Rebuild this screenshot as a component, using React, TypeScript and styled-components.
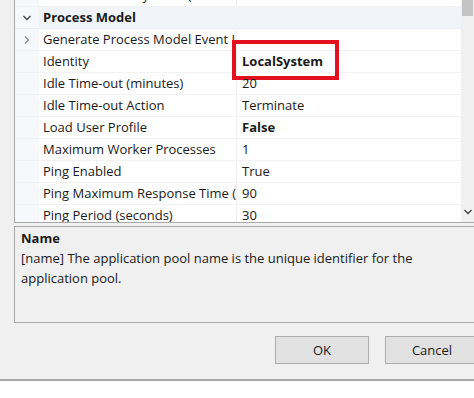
import { FC } from 'react';
import styled, { createGlobalStyle } from 'styled-components';

type Property = {
	name: string;
	value?: string;
	bold?: boolean;
	category?: boolean;
	expandable?: boolean;
	highlight?: boolean;
};

const properties: Property[] = [
	{ name: 'Processor Affinity Mask (64-bit option)', value: '4294967295' },
	{ name: 'Process Model', category: true },
	{ name: 'Generate Process Model Event Log Entry', expandable: true },
	{ name: 'Identity', value: 'LocalSystem', bold: true, highlight: true },
	{ name: 'Idle Time-out (minutes)', value: '20' },
	{ name: 'Idle Time-out Action', value: 'Terminate' },
	{ name: 'Load User Profile', value: 'False', bold: true },
	{ name: 'Maximum Worker Processes', value: '1' },
	{ name: 'Ping Enabled', value: 'True' },
	{ name: 'Ping Maximum Response Time (seconds)', value: '90' },
	{ name: 'Ping Period (seconds)', value: '30' },
	{ name: 'Process Orphaning', category: true },
];

const Chevron: FC<{ down?: boolean }> = ({ down }) => (
	<svg width="10" height="10" viewBox="0 0 10 10">
		<path
			d={down ? 'M1.5 3 L5 6.5 L8.5 3' : 'M3 1.5 L6.5 5 L3 8.5'}
			fill="none"
			stroke={down ? '#404040' : '#8a8a8a'}
			strokeWidth="1.3"
		/>
	</svg>
);

const App: FC = () => (
	<>
		<GlobalStyle />
		<Frame>
			<Dialog>
				<Grid>
					<Viewport>
						<List>
							{properties.map((p, i) =>
								p.category ? (
									<CategoryRow key={i}>
										<Gutter>
											<Chevron down />
										</Gutter>
										<CategoryName>{p.name}</CategoryName>
									</CategoryRow>
								) : (
									<Row key={i}>
										<Gutter>{p.expandable && <Chevron />}</Gutter>
										<NameCell>{p.name}</NameCell>
										<ValueCell $bold={p.bold}>
											{p.value}
											{p.highlight && <Highlight />}
										</ValueCell>
									</Row>
								)
							)}
						</List>
					</Viewport>
					<ScrollBar>
						<Thumb />
						<ScrollArrow>
							<Chevron down />
						</ScrollArrow>
					</ScrollBar>
				</Grid>
				<Description>
					<DescTitle>Name</DescTitle>
					<DescText>
						[name] The application pool name is the unique identifier for the
						<br />
						application pool.
					</DescText>
				</Description>
				<Footer>
					<Button>OK</Button>
					<Button>Cancel</Button>
				</Footer>
			</Dialog>
		</Frame>
	</>
);

const GlobalStyle = createGlobalStyle`
	body {
		margin: 0;
		background: #ffffff;
		overflow: hidden;
		font-family: 'Open Sans', 'Noto Sans', sans-serif;
		color: #1a1a1a;
	}
`;

const Frame = styled.div`
	width: 474px;
	height: 398px;
	overflow: hidden;
	background: #ffffff;
`;

const Dialog = styled.div`
	width: 490px;
	height: 381px;
	box-sizing: border-box;
	background: #f0f0f0;
	border-bottom: 2px solid #a8a8a8;
	padding-left: 14px;
	display: flex;
	flex-direction: column;
`;

const Grid = styled.div`
	width: 460px;
	height: 223px;
	box-sizing: border-box;
	border-left: 1px solid #a9a9a9;
	border-bottom: 1px solid #a9a9a9;
	display: flex;
	background: #ffffff;
`;

const Viewport = styled.div`
	flex: 1;
	overflow: hidden;
`;

const List = styled.div`
	margin-top: -15px;
`;

const Row = styled.div`
	display: grid;
	grid-template-columns: 24px 198px 1fr;
	height: 22px;
	font-size: 13px;
	line-height: 21px;
	border-bottom: 1px solid #f2f2f2;
	box-sizing: border-box;
`;

const CategoryRow = styled(Row)`
	grid-template-columns: 24px 1fr;
	background: #f1f5fa;
	border-bottom-color: #e8edf4;
`;

const Gutter = styled.div`
	background: #f6f8fb;
	display: flex;
	align-items: center;
	justify-content: center;
	padding-top: 1px;
`;

const NameCell = styled.div`
	padding-left: 4px;
	white-space: nowrap;
	overflow: hidden;
	border-right: 1px solid #f0f0f0;
`;

const CategoryName = styled.div`
	padding-left: 4px;
	font-weight: 700;
	white-space: nowrap;
`;

const ValueCell = styled.div<{ $bold?: boolean }>`
	position: relative;
	padding-left: 5px;
	font-weight: ${(p) => (p.$bold ? 700 : 400)};
	white-space: nowrap;
`;

const Highlight = styled.span`
	position: absolute;
	left: -5px;
	top: -11px;
	width: 107px;
	height: 40px;
	box-sizing: border-box;
	border: 4px solid #e3111f;
`;

const ScrollBar = styled.div`
	width: 13px;
	background: #f0f0f0;
	display: flex;
	flex-direction: column;
	justify-content: space-between;
	align-items: center;
`;

const Thumb = styled.div`
	width: 11px;
	height: 16px;
	background: #c4c4c4;
`;

const ScrollArrow = styled.div`
	height: 14px;
	margin-bottom: 3px;
	display: flex;
	align-items: center;
`;

const Description = styled.div`
	margin-top: 3px;
	width: 470px;
	height: 97px;
	box-sizing: border-box;
	border: 1px solid #a9a9a9;
	padding: 1px 6px;
	font-size: 13px;
	line-height: 20px;
`;

const DescTitle = styled.div`
	font-weight: 700;
`;

const DescText = styled.div``;

const Footer = styled.div`
	display: flex;
	gap: 16px;
	padding: 13px 0 0 261px;
`;

const Button = styled.button`
	width: 94px;
	height: 28px;
	flex: none;
	background: #e1e1e1;
	border: 1px solid #adadad;
	font-family: 'Open Sans', 'Noto Sans', sans-serif;
	font-size: 13px;
	color: #1a1a1a;
	padding: 0;
`;

export default App;
